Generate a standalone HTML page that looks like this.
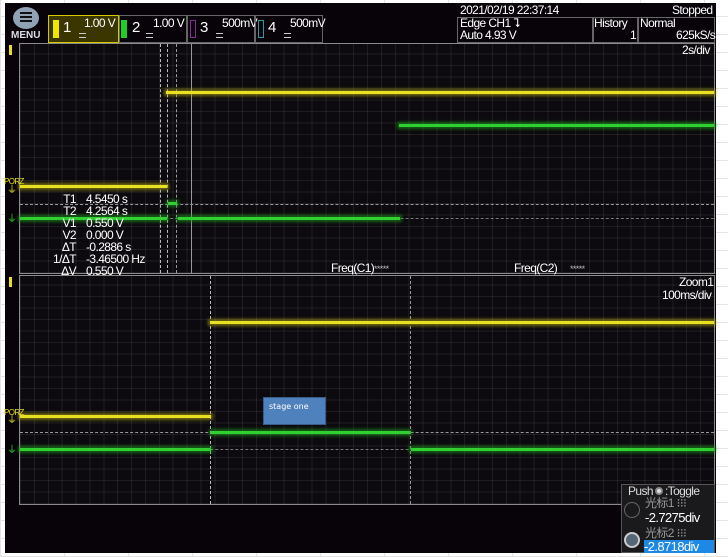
<!DOCTYPE html>
<html><head><style>
*{margin:0;padding:0;box-sizing:border-box}
body{width:728px;height:557px;background:#fff;position:relative;overflow:hidden;font-family:"Liberation Sans","Noto Sans CJK SC",sans-serif;color:#fff}
.a{position:absolute}
.scope{left:5px;top:3px;width:711px;height:550px;background:#070308}
.graph{border:1px solid #8a8a8a;background-color:#0c0a0e;background-image:repeating-linear-gradient(90deg,rgba(255,255,255,.08) 0 1px,transparent 1px 13.88px),repeating-linear-gradient(0deg,rgba(255,255,255,.08) 0 1px,transparent 1px 11.5px)}
.t{font-family:"Liberation Sans",sans-serif;font-size:12px;line-height:13px;white-space:nowrap;letter-spacing:-0.6px}
.y{background:#e8e020;box-shadow:0 0 3px 2px rgba(180,170,20,.6)}
.g{background:#30d030;box-shadow:0 0 3px 2px rgba(30,160,30,.6)}
.box{border:1px solid #666}
</style></head><body>
<div class="a" style="left:0;top:0;width:728px;height:557px;background-image:repeating-linear-gradient(0deg,#e4e4e4 0 1px,transparent 1px 18px),repeating-linear-gradient(90deg,#e4e4e4 0 1px,transparent 1px 64px)"></div>
<div class="a scope"></div>

<div class="a" style="left:13px;top:7px;width:26px;height:22px;border-radius:50%;background:#8fa3b5"></div>
<div class="a" style="left:20px;top:12px;width:12px;height:2px;background:#111;box-shadow:0 4px 0 #111,0 8px 0 #111"></div>
<div class="a" style="left:11px;top:30px;font-size:10px;font-weight:bold;color:#d8dde8">MENU</div>

<div class="a" style="left:48px;top:15px;width:71px;height:28px;border:1px solid #d8c800;background:#3b3500"></div>
<div class="a" style="left:53px;top:20px;width:6px;height:18px;background:#f0e600"></div>
<div class="a t" style="left:63px;top:21px;font-size:15px">1</div>
<div class="a t" style="left:84px;top:17px">1.00 V</div>
<div class="a" style="left:79px;top:33px;width:7px;height:5px;border-bottom:1px solid #ccc;border-top:1px solid #ccc"></div>
<div class="a box" style="left:119px;top:15px;width:68px;height:28px"></div>
<div class="a" style="left:121px;top:20px;width:6px;height:18px;background:#20d020"></div>
<div class="a t" style="left:132px;top:21px;font-size:15px">2</div>
<div class="a t" style="left:153px;top:17px">1.00 V</div>
<div class="a" style="left:146px;top:33px;width:7px;height:5px;border-bottom:1px solid #ccc;border-top:1px solid #ccc"></div>
<div class="a box" style="left:187px;top:15px;width:68px;height:28px"></div>
<div class="a" style="left:190px;top:20px;width:6px;height:18px;border:1px solid #8a2a9a"></div>
<div class="a t" style="left:200px;top:21px;font-size:15px">3</div>
<div class="a t" style="left:222px;top:17px">500mV</div>
<div class="a" style="left:216px;top:33px;width:7px;height:5px;border-bottom:1px solid #ccc;border-top:1px solid #ccc"></div>
<div class="a box" style="left:255px;top:15px;width:68px;height:28px"></div>
<div class="a" style="left:258px;top:20px;width:6px;height:18px;border:1px solid #2a9a9a"></div>
<div class="a t" style="left:268px;top:21px;font-size:15px">4</div>
<div class="a t" style="left:290px;top:17px">500mV</div>
<div class="a" style="left:284px;top:33px;width:7px;height:5px;border-bottom:1px solid #ccc;border-top:1px solid #ccc"></div>

<div class="a t" style="left:460px;top:4px">2021/02/19 22:37:14</div>
<div class="a t" style="left:672px;top:4px">Stopped</div>
<div class="a box" style="left:457px;top:17px;width:136px;height:26px"></div>
<div class="a box" style="left:593px;top:17px;width:45px;height:26px"></div>
<div class="a box" style="left:638px;top:17px;width:77px;height:26px"></div>
<div class="a t" style="left:460px;top:17px">Edge CH1 ⮧</div>
<div class="a t" style="left:460px;top:29px">Auto 4.93 V</div>
<div class="a t" style="left:594px;top:17px">History</div>
<div class="a t" style="left:630px;top:29px">1</div>
<div class="a t" style="left:640px;top:17px">Normal</div>
<div class="a t" style="left:676px;top:29px">625kS/s</div>

<div class="a graph" style="left:19px;top:43px;width:696px;height:231px"></div>
<div class="a" style="left:9px;top:45px;width:3px;height:10px;background:#e8e020"></div>
<div class="a t" style="left:682px;top:44px">2s/div</div>
<div class="a" style="left:20px;top:204px;width:694px;border-top:1px dashed #999"></div>
<div class="a" style="left:20px;top:218px;width:694px;border-top:1px dashed #777"></div>
<div class="a" style="left:160px;top:44px;height:229px;border-left:1px dashed #bbb"></div>
<div class="a" style="left:167px;top:44px;height:229px;border-left:1px dashed #bbb"></div>
<div class="a" style="left:176px;top:44px;height:229px;border-left:1px dashed #999"></div>
<div class="a" style="left:191px;top:44px;height:229px;border-left:1px solid #999"></div>
<div class="a y" style="left:20px;top:185px;width:147px;height:3px"></div>
<div class="a y" style="left:166px;top:91px;width:548px;height:3px"></div>
<div class="a g" style="left:20px;top:217px;width:147px;height:3px"></div>
<div class="a g" style="left:168px;top:202px;width:9px;height:3px"></div>
<div class="a g" style="left:178px;top:217px;width:222px;height:3px"></div>
<div class="a g" style="left:399px;top:124px;width:315px;height:3px"></div>
<div class="a t" style="left:4px;top:175px;font-size:8px;color:#e8e020">PORZ</div>
<div class="a t" style="left:7px;top:184px;font-size:10px;color:#e8e020">⏚</div>
<div class="a t" style="left:7px;top:213px;font-size:10px;color:#30d030">⏚</div>
<div class="a t" style="left:36px;top:193px;line-height:12px;text-align:right;width:40px">T1<br>T2<br>V1<br>V2<br>ΔT<br>1/ΔT<br>ΔV</div>
<div class="a t" style="left:86px;top:193px;line-height:12px">4.5450 s<br>4.2564 s<br>0.550 V<br>0.000 V<br>-0.2886 s<br>-3.46500 Hz<br>0.550 V</div>
<div class="a t" style="left:331px;top:262px">Freq(C1)</div>
<div class="a t" style="left:374px;top:263px;font-size:9px;color:#bbb">*****</div>
<div class="a t" style="left:514px;top:262px">Freq(C2)</div>
<div class="a t" style="left:570px;top:263px;font-size:9px;color:#bbb">*****</div>

<div class="a graph" style="left:19px;top:275px;width:696px;height:230px"></div>
<div class="a" style="left:9px;top:277px;width:3px;height:10px;background:#e8e020"></div>
<div class="a t" style="left:679px;top:276px">Zoom1</div>
<div class="a t" style="left:662px;top:289px">100ms/div</div>
<div class="a" style="left:20px;top:432px;width:694px;border-top:1px dashed #999"></div>
<div class="a" style="left:20px;top:449px;width:694px;border-top:1px dashed #777"></div>
<div class="a" style="left:210px;top:276px;height:228px;border-left:1px dashed #bbb"></div>
<div class="a" style="left:410px;top:276px;height:228px;border-left:1px dashed #999"></div>
<div class="a y" style="left:20px;top:415px;width:191px;height:3px"></div>
<div class="a y" style="left:210px;top:321px;width:504px;height:3px"></div>
<div class="a g" style="left:20px;top:448px;width:191px;height:3px"></div>
<div class="a g" style="left:211px;top:431px;width:199px;height:3px"></div>
<div class="a g" style="left:411px;top:448px;width:303px;height:3px"></div>
<div class="a t" style="left:4px;top:406px;font-size:8px;color:#e8e020">PORZ</div>
<div class="a t" style="left:7px;top:414px;font-size:10px;color:#e8e020">⏚</div>
<div class="a t" style="left:7px;top:444px;font-size:10px;color:#30d030">⏚</div>
<div class="a" style="left:263px;top:397px;width:63px;height:28px;background:#4f81bd;border:1px solid #385d8a"></div>
<div class="a" style="left:269px;top:402px;font-size:8px;font-family:'DejaVu Sans',sans-serif">stage one</div>

<div class="a" style="left:621px;top:484px;width:94px;height:69px;background:#1a1a1c;border:1px solid #555"></div>
<div class="a t" style="left:628px;top:485px;color:#ddd">Push<span style="display:inline-block;width:8px;height:8px;border-radius:50%;background:#ddd;border:2px solid #888;margin:0 2px"></span>:Toggle</div>
<div class="a" style="left:624px;top:502px;width:16px;height:16px;border-radius:50%;border:1px solid #666"></div>
<div class="a t" style="left:645px;top:497px;color:#999">光标1 ⁝⁝⁝</div>
<div class="a t" style="left:645px;top:511px;font-size:13px">-2.7275div</div>
<div class="a" style="left:624px;top:532px;width:16px;height:16px;border-radius:50%;border:2px solid #ccc;background:#567"></div>
<div class="a t" style="left:645px;top:527px;color:#999">光标2 ⁝⁝⁝</div>
<div class="a t" style="left:644px;top:540px;font-size:13px;background:#1e88e5;width:70px">-2.8718div</div>
</body></html>
